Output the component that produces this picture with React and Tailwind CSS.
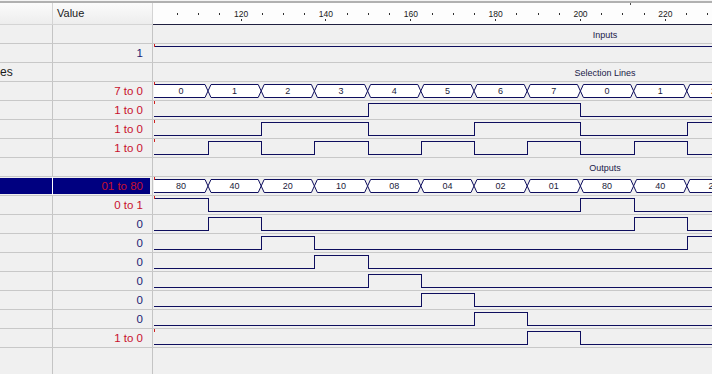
const WAVE = '#0e0e5e'
const W = 559

// segment bounds in wave-local x (wave area starts at x=153)
const B = [1]
for (let k = 0; k <= 10; k++) B.push(55 + 53.2 * k)

const px = (x) => Math.round(x) + 0.5

const ROWS = [
  { group: 'Inputs' },
  { bit: [0, 1, 2, 3, 4, 5, 6, 7, 8, 9, 10], value: '1', mark: true },
  { group: 'Selection Lines', name: 'es' },
  { bus: ['0', '1', '2', '3', '4', '5', '6', '7', '0', '1', '2'], value: '7 to 0', red: true, mark: true },
  { bit: [4, 5, 6, 7], value: '1 to 0', red: true, mark: true },
  { bit: [2, 3, 6, 7, 10], value: '1 to 0', red: true, mark: true },
  { bit: [1, 3, 5, 7, 9], value: '1 to 0', red: true, mark: true },
  { group: 'Outputs' },
  { bus: ['80', '40', '20', '10', '08', '04', '02', '01', '80', '40', '20'], value: '01 to 80', red: true, mark: true, selected: true },
  { bit: [0, 8], value: '0 to 1', red: true, mark: true },
  { bit: [1, 9], value: '0' },
  { bit: [2, 10], value: '0' },
  { bit: [3], value: '0' },
  { bit: [4], value: '0' },
  { bit: [5], value: '0' },
  { bit: [6], value: '0' },
  { bit: [7], value: '1 to 0', red: true, mark: true },
]

function bitPath(highs) {
  const y = (i) => (highs.includes(i) ? 2.5 : 15.5)
  let d = `M${B[0]} ${y(0)}`
  for (let i = 0; i < 11; i++) {
    const x = px(B[i + 1])
    d += ` L${x} ${y(i)}`
    if (i < 10 && y(i) !== y(i + 1)) d += ` L${x} ${y(i + 1)}`
  }
  return d
}

function Wave({ row }) {
  return (
    <svg width={W} height={18} className="block" shapeRendering="crispEdges">
      {row.bit && <path d={bitPath(row.bit)} fill="none" stroke={WAVE} strokeWidth="1" />}
      {row.bus &&
        row.bus.map((v, i) => {
          const a = B[i]
          const b = B[i + 1]
          const d =
            i === 0
              ? `M${a} 2.5 L${b - 3} 2.5 L${b} 9 L${b - 3} 15.5 L${a} 15.5`
              : `M${a} 9 L${a + 3} 2.5 L${b - 3} 2.5 L${b} 9 L${b - 3} 15.5 L${a + 3} 15.5 Z`
          return (
            <g key={i}>
              <path d={d} fill="#ffffff" stroke={WAVE} strokeWidth="1" shapeRendering="auto" />
              <text
                x={(a + b) / 2}
                y={12}
                textAnchor="middle"
                fontSize="9"
                fill="#1a1a3a"
                fontFamily="'Liberation Sans', Arial, sans-serif"
              >
                {v}
              </text>
            </g>
          )
        })}
      {row.group && (
        <text
          x={452}
          y={13}
          textAnchor="middle"
          fontSize="9"
          fill="#202048"
          fontFamily="'Liberation Sans', Arial, sans-serif"
        >
          {row.group}
        </text>
      )}
      {row.mark && <rect x={1} y={0} width={1} height={3} fill="#d02020" />}
    </svg>
  )
}

function Ruler() {
  const tx = (t) => 427 + (t - 200) * 4.2425
  const labels = [120, 140, 160, 180, 200, 220]
  const dots = []
  for (let t = 105; t <= 230; t += 5) if (t % 20 !== 0) dots.push(t)
  return (
    <svg width={W} height={22} className="block" shapeRendering="crispEdges">
      <rect x={0} y={0} width={W} height={22} fill="#fdfdfd" />
      <rect x={477} y={0} width={1} height={2} fill="#505050" />
      {dots.map((t) => (
        <rect key={t} x={Math.round(tx(t))} y={10} width={1} height={2} fill="#303030" />
      ))}
      {labels.map((t) => (
        <g key={t}>
          <text
            x={tx(t) + 0.5}
            y={14}
            textAnchor="middle"
            fontSize="8.5"
            fill="#202020"
            fontFamily="'Liberation Sans', Arial, sans-serif"
            shapeRendering="auto"
          >
            {t}
          </text>
          <rect x={Math.round(tx(t))} y={16} width={1} height={2} fill="#303030" />
        </g>
      ))}
      <rect x={0} y={21} width={W} height={1} fill="#202040" />
    </svg>
  )
}

export default function App() {
  return (
    <div className="w-[712px] h-[374px] overflow-hidden bg-[#f0f0f0] flex flex-col font-['Liberation_Sans',Arial,sans-serif]">
      <div className="h-[3px] bg-[#f4f4f4] border-b-2 border-[#b0b0b0] shrink-0" />
      <div className="flex h-[22px] shrink-0">
        <div className="w-[53px] border-r border-b border-[#d4d4d4] bg-gradient-to-b from-[#fbfbfb] to-[#ededed]" />
        <div className="w-[100px] border-r border-b border-[#d4d4d4] bg-gradient-to-b from-[#fbfbfb] to-[#ededed] pl-[4px] text-[11px] leading-[21px] text-[#1a1a1a]">
          Value
        </div>
        <Ruler />
      </div>
      {ROWS.map((row, i) => (
        <div key={i} className="flex h-[19px] shrink-0 border-b border-[#c8c8c8]">
          <div
            className={`w-[53px] border-r ${row.selected ? 'border-white' : 'border-[#c4c4c4]'} text-[12px] leading-[18px] text-[#1a1a1a] whitespace-nowrap overflow-hidden`}
          >
            {row.selected ? <div className="h-[16px] mt-[1px] bg-[#000080]" /> : row.name}
          </div>
          <div className="w-[100px] border-r border-[#c4c4c4]">
            <div
              className={`h-[16px] mt-[1px] text-right text-[11.5px] leading-[16px] ${
                row.selected ? 'bg-[#000080] mr-[2px] pr-[7px]' : 'pr-[9px]'
              } ${row.red ? 'text-[#c8102e]' : 'text-[#1c1c70]'}`}
            >
              {row.value}
            </div>
          </div>
          <Wave row={row} />
        </div>
      ))}
      <div className="flex flex-1">
        <div className="w-[53px] border-r border-[#c4c4c4]" />
        <div className="w-[100px] border-r border-[#c4c4c4]" />
        <div className="flex-1" />
      </div>
    </div>
  )
}
